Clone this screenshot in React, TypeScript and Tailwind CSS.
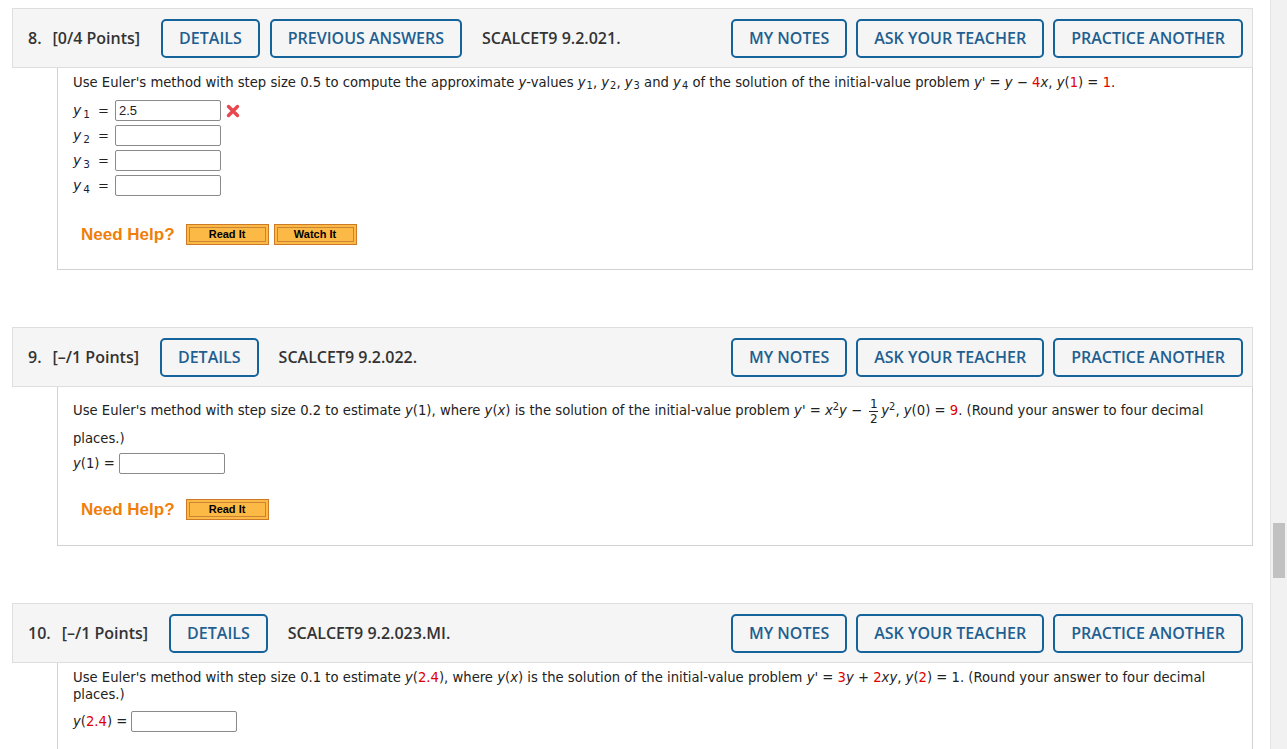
import React from "react";

const HEAD = { fontFamily: '"Open Sans", "Liberation Sans", sans-serif' };
const BODY = { fontFamily: '"DejaVu Sans", Verdana, sans-serif' };
const HELP = { fontFamily: '"Liberation Sans", Arial, sans-serif' };

function V({ children }: { children: React.ReactNode }) {
  return <i className="italic">{children}</i>;
}

function R({ children }: { children: React.ReactNode }) {
  return <span className="text-[#e00000]">{children}</span>;
}

function OutlineButton({ label }: { label: string }) {
  return (
    <span className="flex h-[39px] items-center rounded-[5px] border-2 border-[#14639b] px-[16px] text-[16px] font-semibold text-[#1f5f91]">
      {label}
    </span>
  );
}

function HelpButton({ label }: { label: string }) {
  return (
    <span className="flex h-[21px] w-[83px] border border-[#cc7a26] bg-[#fdb945] p-[2px]">
      <span className="flex flex-1 items-center justify-center border border-[#c98434] text-[11px] font-bold leading-none text-black">
        {label}
      </span>
    </span>
  );
}

function AnswerBox({ value }: { value?: string }) {
  return (
    <span
      className="inline-flex h-[21px] w-[106px] items-center rounded-[2px] border border-[#8a8a8a] bg-white px-[3px] text-[13px] text-[#222]"
      style={HELP}
    >
      {value}
    </span>
  );
}

function WrongMark() {
  return (
    <svg width="14" height="14" viewBox="0 0 14 14" className="ml-[5px]">
      <path d="M2.5 2.5 L11.5 11.5 M11.5 2.5 L2.5 11.5" stroke="#e8474d" strokeWidth="3.4" strokeLinecap="round" />
    </svg>
  );
}

function NeedHelp({ watch = false, top }: { watch?: boolean; top: string }) {
  return (
    <div className={`ml-[8px] ${top} flex h-[21px] items-center gap-[5px]`} style={HELP}>
      <span className="mr-[6px] text-[17px] font-bold leading-none text-[#ef7f0a]">Need Help?</span>
      <HelpButton label="Read It" />
      {watch ? <HelpButton label="Watch It" /> : null}
    </div>
  );
}

function Header({
  num,
  points,
  code,
  previous = false,
}: {
  num: string;
  points: string;
  code: string;
  previous?: boolean;
}) {
  return (
    <div
      className="flex h-[60px] items-center border border-[#dedede] bg-[#f5f5f5] pl-[15px] pr-[9px]"
      style={HEAD}
    >
      <span className="text-[16px] font-semibold text-[#333]">{num}</span>
      <span className="ml-[11px] text-[16px] font-semibold text-[#333]">{points}</span>
      <div className="ml-[21px] flex gap-[10px]">
        <OutlineButton label="DETAILS" />
        {previous ? <OutlineButton label="PREVIOUS ANSWERS" /> : null}
      </div>
      <span className="ml-[20px] text-[16px] font-semibold text-[#333]">{code}</span>
      <div className="ml-auto flex gap-[9px]">
        <OutlineButton label="MY NOTES" />
        <OutlineButton label="ASK YOUR TEACHER" />
        <OutlineButton label="PRACTICE ANOTHER" />
      </div>
    </div>
  );
}

function YRow({ n, value, wrong = false }: { n: number; value?: string; wrong?: boolean }) {
  return (
    <div className="flex h-[21px] items-center">
      <span className="w-[25px] text-[14px] text-[#1d1d3a]">
        <V>y</V>
        <sub className="ml-[2px]">{n}</sub>
      </span>
      <span className="w-[17px] text-[13px]">=</span>
      <AnswerBox value={value} />
      {wrong ? <WrongMark /> : null}
    </div>
  );
}

function Fraction() {
  return (
    <span className="mx-[3px] inline-flex flex-col items-center align-middle text-[12px] leading-[12px]">
      <span>1</span>
      <span className="my-[1px] h-px w-[9px] bg-[#222]" />
      <span>2</span>
    </span>
  );
}

function Question8() {
  return (
    <section>
      <Header num="8." points="[0/4 Points]" code="SCALCET9 9.2.021." previous />
      <div className="ml-[45px] border-x border-b border-[#d2d2d2] bg-white pb-[24px] pl-[15px] pt-[6px] text-[#222]" style={BODY}>
        <p className="whitespace-nowrap text-[13.2px] leading-[17px]">
          Use Euler's method with step size 0.5 to compute the approximate <V>y</V>-values <V>y</V>
          <sub className="ml-[1px]">1</sub>, <V>y</V>
          <sub className="ml-[1px]">2</sub>, <V>y</V>
          <sub className="ml-[1px]">3</sub> and <V>y</V>
          <sub className="ml-[1px]">4</sub> of the solution of the initial-value problem <V>y</V>' = <V>y</V> −{" "}
          <R>4</R>
          <V>x</V>, <V>y</V>(<R>1</R>) = <R>1</R>.
        </p>
        <div className="mt-[9px] flex flex-col gap-[4px]">
          <YRow n={1} value="2.5" wrong />
          <YRow n={2} />
          <YRow n={3} />
          <YRow n={4} />
        </div>
        <NeedHelp watch top="mt-[28px]" />
      </div>
    </section>
  );
}

function Question9() {
  return (
    <section>
      <Header num="9." points="[–/1 Points]" code="SCALCET9 9.2.022." />
      <div className="ml-[45px] border-x border-b border-[#d2d2d2] bg-white pb-[25px] pl-[15px] pt-[10px] text-[#222]" style={BODY}>
        <p className="whitespace-nowrap text-[13.2px] leading-[28px]">
          Use Euler's method with step size 0.2 to estimate <V>y</V>(1), where <V>y</V>(<V>x</V>) is the solution of
          the initial-value problem <V>y</V>' = <V>x</V>
          <sup>2</sup>
          <V>y</V> − <Fraction />
          <V>y</V>
          <sup>2</sup>, <V>y</V>(0) = <R>9</R>. (Round your answer to four decimal
          <br />
          places.)
        </p>
        <div className="flex h-[21px] items-center gap-[4px] text-[13.2px]">
          <span>
            <V>y</V>(1) =
          </span>
          <AnswerBox />
        </div>
        <NeedHelp top="mt-[25px]" />
      </div>
    </section>
  );
}

function Question10() {
  return (
    <section>
      <Header num="10." points="[–/1 Points]" code="SCALCET9 9.2.023.MI." />
      <div className="ml-[45px] border-x border-b border-[#d2d2d2] bg-white pb-[30px] pl-[15px] pt-[6px] text-[#222]" style={BODY}>
        <p className="whitespace-nowrap text-[13.2px] leading-[17px]">
          Use Euler's method with step size 0.1 to estimate <V>y</V>(<R>2.4</R>), where <V>y</V>(<V>x</V>) is the
          solution of the initial-value problem <V>y</V>' = <R>3</R>
          <V>y</V> + <R>2</R>
          <V>xy</V>, <V>y</V>(<R>2</R>) = 1. (Round your answer to four decimal
          <br />
          places.)
        </p>
        <div className="mt-[8px] flex h-[21px] items-center gap-[4px] text-[13.2px]">
          <span>
            <V>y</V>(<R>2.4</R>) =
          </span>
          <AnswerBox />
        </div>
        <div className="h-[40px]" />
      </div>
    </section>
  );
}

export default function App() {
  return (
    <div className="flex h-[749px] w-full overflow-hidden bg-white">
      <main className="flex flex-1 flex-col gap-[57px] pl-[12px] pr-[17px] pt-[8px]">
        <Question8 />
        <Question9 />
        <Question10 />
      </main>
      <div className="flex w-[17px] flex-col border-l border-[#e6e6e6] bg-[#f1f1f1] pt-[523px]">
        <div className="mx-[2px] h-[55px] bg-[#c1c1c1]" />
      </div>
    </div>
  );
}
